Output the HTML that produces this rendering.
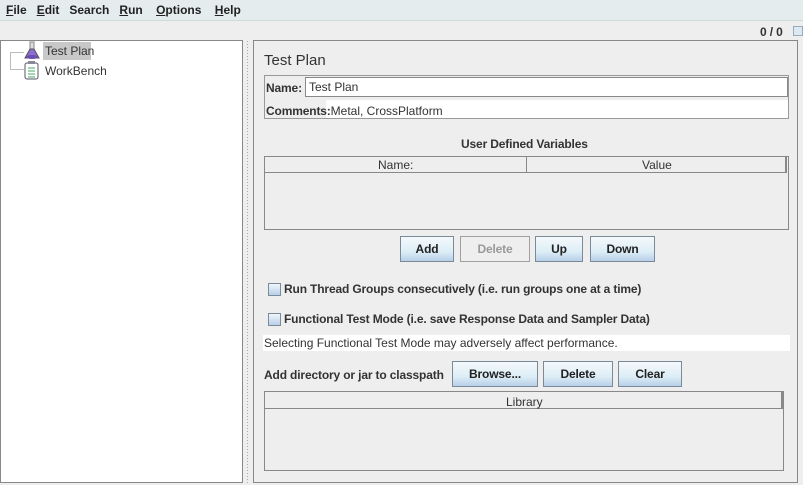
<!DOCTYPE html>
<html><head><style>
*{box-sizing:border-box;margin:0;padding:0}
body{width:803px;height:485px;background:#eeeeee;font-family:"Liberation Sans",sans-serif;font-size:12px;color:#333;position:relative;overflow:hidden}
.a{position:absolute}
.b{font-weight:bold;letter-spacing:-0.15px}
.btn{position:absolute;height:26px;border:1px solid #7a8a99;background:linear-gradient(#f4f8fb,#ddeef6 60%,#b8cfe9);font-weight:bold;font-size:12px;text-align:center;line-height:24px;color:#222;letter-spacing:-0.15px}
.dis{background:#eeeeee;border-color:#a0a0a0;color:#999}
.cb{position:absolute;width:13px;height:13px;border:1px solid #7a8a99;background:linear-gradient(#f0f6fa,#b8cfe9)}
</style></head><body>
<div class="a" style="left:0;top:0;width:803px;height:21px;background:#e4ecee;border-bottom:1px solid #d0d8da"></div>
<div class="a b" style="left:6px;top:3px;font-size:12px;color:#222;letter-spacing:0"><u>F</u>ile&nbsp;&nbsp;&nbsp;<u>E</u>dit&nbsp;&nbsp;&nbsp;Search&nbsp;&nbsp;&nbsp;<u>R</u>un&nbsp;&nbsp;&nbsp;&nbsp;<u>O</u>ptions&nbsp;&nbsp;&nbsp;&nbsp;<u>H</u>elp</div>
<div class="a b" style="left:760px;top:25px;font-size:12px">0 / 0</div>
<div class="a" style="left:793px;top:26px;width:10px;height:10px;border:1px solid #9ab;background:#dde8f0"></div>
<div class="a" style="left:0;top:40px;width:243px;height:443px;background:#fff;border:1px solid #888"></div>
<div class="a" style="left:10px;top:52px;width:14px;height:18px;border-left:1px solid #bbb;border-top:1px solid #bbb;border-bottom:1px solid #bbb"></div>
<svg class="a" style="left:23px;top:41px" width="18" height="20"><rect x="7" y="1" width="4" height="7" fill="#ddd" stroke="#888"/><path d="M7 8 L2 17 H16 L11 8Z" fill="#8a6fd0" stroke="#555"/><ellipse cx="9" cy="16" rx="6" ry="2" fill="#6a4fb0"/></svg>
<div class="a" style="left:43px;top:42px;width:48px;height:18px;background:#c8c8c8"></div>
<div class="a" style="left:45px;top:44px">Test Plan</div>
<svg class="a" style="left:24px;top:61px" width="16" height="19"><rect x="1" y="2" width="13" height="16" rx="2" fill="#fff" stroke="#556"/><rect x="4" y="0" width="7" height="3" fill="#889"/><path d="M4 7h7M4 10h7M4 13h7M4 16h7" stroke="#4a6"/></svg>
<div class="a" style="left:45px;top:64px">WorkBench</div>
<div class="a" style="left:246px;top:40px;width:3px;height:445px;background-image:radial-gradient(#aaa 0.6px,transparent 0.8px);background-size:3px 3px"></div>
<div class="a" style="left:253px;top:40px;width:545px;height:443px;border:1px solid #888"></div>
<div class="a" style="left:264px;top:52px;font-size:15px;color:#333">Test Plan</div>
<div class="a" style="left:264px;top:75px;width:525px;height:44px;border:1px solid #999"></div>
<div class="a b" style="left:266px;top:81px">Name:</div>
<div class="a" style="left:305px;top:77px;width:483px;height:20px;background:#fff;border:1px solid #888;padding-left:3px;line-height:18px">Test Plan</div>
<div class="a" style="left:326px;top:100px;width:462px;height:18px;background:#fff"></div>
<div class="a" style="left:266px;top:104px"><b style="letter-spacing:-0.15px">Comments:</b>Metal, CrossPlatform</div>
<div class="a b" style="left:461px;top:137px">User Defined Variables</div>
<div class="a" style="left:264px;top:156px;width:525px;height:74px;border:1px solid #888"></div>
<div class="a" style="left:265px;top:157px;width:522px;height:16px;border-bottom:1px solid #888;border-right:2px solid #888"></div>
<div class="a" style="left:526px;top:157px;width:1px;height:16px;background:#888"></div>
<div class="a" style="left:378px;top:158px">Name:</div>
<div class="a" style="left:642px;top:158px">Value</div>
<div class="btn" style="left:400px;top:236px;width:54px">Add</div>
<div class="btn dis" style="left:460px;top:236px;width:70px">Delete</div>
<div class="btn" style="left:535px;top:236px;width:48px">Up</div>
<div class="btn" style="left:590px;top:236px;width:65px">Down</div>
<div class="cb" style="left:268px;top:283px"></div>
<div class="a b" style="left:284px;top:282px">Run Thread Groups consecutively (i.e. run groups one at a time)</div>
<div class="cb" style="left:268px;top:313px"></div>
<div class="a b" style="left:284px;top:312px">Functional Test Mode (i.e. save Response Data and Sampler Data)</div>
<div class="a" style="left:263px;top:335px;width:527px;height:16px;background:#fff"></div>
<div class="a" style="left:264px;top:336px">Selecting Functional Test Mode may adversely affect performance.</div>
<div class="a b" style="left:264px;top:368px">Add directory or jar to classpath</div>
<div class="btn" style="left:452px;top:361px;width:86px">Browse...</div>
<div class="btn" style="left:543px;top:361px;width:70px">Delete</div>
<div class="btn" style="left:618px;top:361px;width:64px">Clear</div>
<div class="a" style="left:264px;top:391px;width:520px;height:80px;border:1px solid #888"></div>
<div class="a" style="left:265px;top:392px;width:518px;height:17px;border-bottom:1px solid #888;border-right:2px solid #888"></div>
<div class="a" style="left:506px;top:395px">Library</div>
</body></html>
